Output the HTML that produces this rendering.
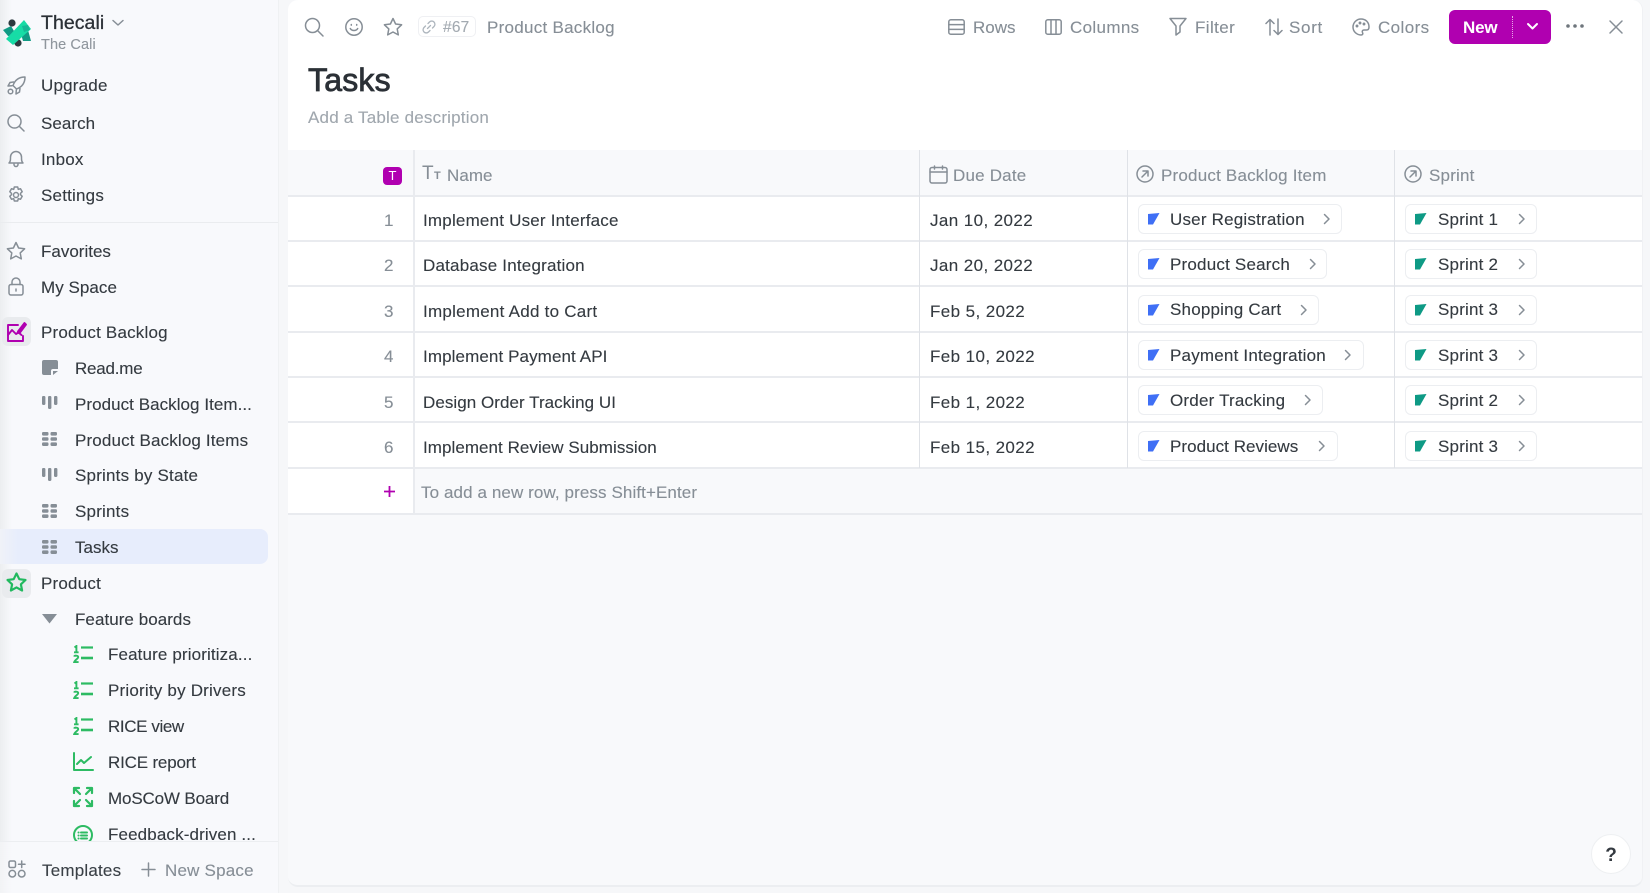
<!DOCTYPE html>
<html><head><meta charset="utf-8">
<style>
*{box-sizing:border-box}
html,body{margin:0;width:1650px;height:893px;overflow:hidden;background:#f6f7f9;font-family:"Liberation Sans",sans-serif;color:#343a40}
#w{position:absolute;left:0;top:0;width:1650px;height:893px;overflow:hidden;filter:blur(.3px)}
.t{position:absolute;height:24px;margin-top:1px;line-height:24px;font-size:17px;letter-spacing:.2px;white-space:nowrap;-webkit-text-stroke:.12px currentColor}
.d{letter-spacing:.4px}
.a{position:absolute}
svg.i{position:absolute;fill:none;stroke:#868e96;stroke-width:1.5;stroke-linecap:round;stroke-linejoin:round;overflow:visible}
.g{color:#868e96}
#side{position:absolute;left:0;top:0;width:279px;height:893px;background:linear-gradient(90deg,#eceef0 0,#f8f9fc 12px);border-right:1px solid #eff1f3;overflow:hidden}
#panel{position:absolute;left:288px;top:0;width:1355px;height:887px;background:#f8f9fb;border-radius:10px 10px 10px 10px;border-bottom:2px solid #eceef1;border-right:1px solid #f0f1f4}
#top{position:absolute;left:288px;top:0;width:1354px;height:150px;background:#fff;border-radius:10px 10px 0 0}
.hl{position:absolute;left:288px;width:1354px;height:2px;background:#e9ebef}
.vl{position:absolute;width:2px;background:#e9ebef}
.chip{position:absolute;height:30px;background:#fff;border:1px solid #eceef1;border-radius:6px}
.flag{position:absolute}
.r{position:absolute;left:288px;width:1354px;height:45px;background:#fff}
</style></head><body>
<svg width="0" height="0" style="position:absolute">
<defs>
<symbol id="grid" viewBox="0 0 16 14"><g fill="#868e96" stroke="none"><rect x="0" y="0" width="6.5" height="3.6" rx="1.2"/><rect x="8.5" y="0" width="6.5" height="3.6" rx="1.2"/><rect x="0" y="5.2" width="6.5" height="3.6" rx="1.2"/><rect x="8.5" y="5.2" width="6.5" height="3.6" rx="1.2"/><rect x="0" y="10.4" width="6.5" height="3.6" rx="1.2"/><rect x="8.5" y="10.4" width="6.5" height="3.6" rx="1.2"/></g></symbol>
<symbol id="kan" viewBox="0 0 16 14"><g fill="#868e96" stroke="none"><rect x="0" y="0" width="3.4" height="9" rx="1.2"/><rect x="6" y="0" width="3.4" height="13" rx="1.2"/><rect x="12" y="0" width="3.4" height="9" rx="1.2"/></g></symbol>
<symbol id="num" viewBox="0 0 20 18"><g fill="none" stroke="#2dbb63" stroke-width="2.2"><path d="M8 2.500h12"/><path d="M8 13h12" stroke-width="2.6"/><path d="M1.500 2.500 3.400 1v6.200M1 7.300h4.600" stroke-width="1.900"/><path d="M1.200 11.600c.4-1.400 4-1.300 4 .5 0 1.600-3.400 2.800-4 5h4.400" stroke-width="1.900"/></g></symbol>
<symbol id="chev" viewBox="0 0 8 12"><path d="M1.500 1.500 6 6l-4.500 4.500" fill="none" stroke="#868e96" stroke-width="1.500" stroke-linecap="round" stroke-linejoin="round"/></symbol>
</defs>
</svg>
<div id="w">
<div id="side">
  <!-- logo -->
  <svg class="a" style="left:0;top:10px" width="50" height="45" viewBox="0 0 50 45">
    <path d="M3 20 11 16 17 26 8 26Z" fill="#119a84"/>
    <path d="M21 24 28 20 31 31 23 31Z" fill="#119a84"/>
    <circle cx="12" cy="13" r="3.600" fill="#2e3a3f"/><circle cx="18" cy="33" r="3.600" fill="#2e3a3f"/>
    <path d="M6 29 13 35 31 19 24 10Z" fill="#17dca6"/>
    <path d="M22 16 28 15 30 20 24 22Z" fill="#17b896"/>
  </svg>
  <div class="t" style="left:41px;top:10px;font-size:19.500px;-webkit-text-stroke:.3px #2b3036;color:#2b3036;letter-spacing:.05px">Thecali</div>
  <svg class="i" style="left:112px;top:19px" width="12" height="8" viewBox="0 0 12 8"><path d="M1 1.500 6 6l5-4.500"/></svg>
  <div class="t" style="left:41px;top:32px;font-size:14.500px;color:#8f969d;letter-spacing:.1px">The Cali</div>

  <svg class="i" style="left:7px;top:76px" width="19" height="19" viewBox="0 0 19 19"><path d="M6 9.500C8 4 12 1 18 1c0 6-3 10-8.500 12L6 9.500Z"/><path d="M6.500 6 3 6.500 1 10l4-.3M13 12.500l-.5 3.500-3.500 2 .3-4"/><circle cx="3.500" cy="15.500" r="2.300"/></svg>
  <div class="t" style="left:41px;top:73px">Upgrade</div>
  <svg class="i" style="left:7px;top:114px" width="18" height="18" viewBox="0 0 18 18"><circle cx="7.500" cy="7.500" r="6.500"/><path d="M12.500 12.500 17 17"/></svg>
  <div class="t" style="left:41px;top:111px;letter-spacing:.05px">Search</div>
  <svg class="i" style="left:7px;top:150px" width="18" height="18" viewBox="0 0 18 18"><path d="M2 13c1.500-1.500 1.500-3 1.500-6a5.500 5.500 0 0 1 11 0c0 3 0 4.500 1.500 6Z"/><path d="M7 14v.5a2 2 0 0 0 4 0V14"/></svg>
  <div class="t" style="left:41px;top:147px">Inbox</div>
  <svg class="i" style="left:7px;top:186px" width="18" height="18" viewBox="0 0 18 18"><path d="M7.300 1h3.400l.6 2.400 2.200-.7 1.700 3-1.700 1.700v1.200l1.700 1.700-1.700 3-2.200-.7-.6 2.400H7.300l-.6-2.400-2.200.7-1.700-3 1.700-1.700V7.400L2.800 5.700l1.700-3 2.200.7Z"/><circle cx="9" cy="9" r="2.500"/></svg>
  <div class="t" style="left:41px;top:183px">Settings</div>
  <div class="a" style="left:0;top:222px;width:278px;height:1px;background:#eaecef"></div>

  <svg class="i" style="left:6px;top:241px" width="20" height="19" viewBox="0 0 20 19"><path d="M10 1.500 12.600 7l6 .8-4.400 4.100 1.100 6L10 15l-5.300 2.900 1.100-6L1.400 7.800l6-.8Z"/></svg>
  <div class="t" style="left:41px;top:239px;letter-spacing:0">Favorites</div>
  <svg class="i" style="left:8px;top:277px" width="16" height="19" viewBox="0 0 16 19"><rect x="1" y="7.500" width="14" height="10.500" rx="2"/><path d="M4 7.500V5a4 4 0 0 1 8 0v2.500M8 12v2"/></svg>
  <div class="t" style="left:41px;top:275px;letter-spacing:.05px">My Space</div>

  <div class="a" style="left:2px;top:317px;width:29px;height:29px;background:#e9ebee;border-radius:6px"></div>
  <svg class="i" style="left:7px;top:320px;stroke:#b000b0;stroke-width:1.900" width="20" height="22" viewBox="0 0 20 22"><path d="M11 5H1v16h15v-5"/><path d="M1 15l4-5 4 4 2.500-1.500 3 2.500"/><path d="M11 11.500 17.500 3l1.500 1.500-6 8-2.500.5Z" fill="#b000b0"/></svg>
  <div class="t" style="left:41px;top:320px">Product Backlog</div>

  <svg class="a" style="left:42px;top:360px" width="16" height="15" viewBox="0 0 16 15"><path d="M2 0h12a2 2 0 0 1 2 2v7h-5a2 2 0 0 0-2 2v4H2a2 2 0 0 1-2-2V2a2 2 0 0 1 2-2ZM11 11h5l-5 4Z" fill="#868e96"/></svg>
  <div class="t" style="left:75px;top:356px;letter-spacing:-.22px">Read.me</div>
  <svg class="a" style="left:42px;top:396px" width="16" height="14"><use href="#kan"/></svg>
  <div class="t" style="left:75px;top:392px;letter-spacing:.05px">Product Backlog Item...</div>
  <svg class="a" style="left:42px;top:432px" width="16" height="14"><use href="#grid"/></svg>
  <div class="t" style="left:75px;top:428px;letter-spacing:.15px">Product Backlog Items</div>
  <svg class="a" style="left:42px;top:468px" width="16" height="14"><use href="#kan"/></svg>
  <div class="t" style="left:75px;top:463px">Sprints by State</div>
  <svg class="a" style="left:42px;top:504px" width="16" height="14"><use href="#grid"/></svg>
  <div class="t" style="left:75px;top:499px">Sprints</div>
  <div class="a" style="left:0;top:529px;width:268px;height:35px;background:linear-gradient(90deg,#f0f2f8 0,#e7edfc 18px);border-radius:0 8px 8px 0"></div>
  <svg class="a" style="left:42px;top:540px" width="16" height="14"><use href="#grid"/></svg>
  <div class="t" style="left:75px;top:535px;letter-spacing:0">Tasks</div>

  <div class="a" style="left:2px;top:569px;width:29px;height:29px;background:#e9ebee;border-radius:6px"></div>
  <svg class="i" style="left:6px;top:572px;stroke:#22b95f;stroke-width:2.200" width="21" height="20" viewBox="0 0 21 20"><path d="M10.500 1.500 13.300 7.200l6.200.8-4.600 4.300 1.200 6.200-5.600-3.100-5.600 3.100 1.200-6.200L1.500 8l6.200-.8Z"/></svg>
  <div class="t" style="left:41px;top:571px">Product</div>

  <svg class="a" style="left:42px;top:614px" width="15" height="10" viewBox="0 0 15 10"><path d="M0 0h15L7.500 9.500Z" fill="#868e96"/></svg>
  <div class="t" style="left:75px;top:607px;letter-spacing:.05px">Feature boards</div>

  <svg class="a" style="left:73px;top:645px" width="20" height="18"><use href="#num"/></svg>
  <div class="t" style="left:108px;top:642px;letter-spacing:.13px">Feature prioritiza...</div>
  <svg class="a" style="left:73px;top:681px" width="20" height="18"><use href="#num"/></svg>
  <div class="t" style="left:108px;top:678px">Priority by Drivers</div>
  <svg class="a" style="left:73px;top:717px" width="20" height="18"><use href="#num"/></svg>
  <div class="t" style="left:108px;top:714px;letter-spacing:-.4px">RICE view</div>
  <svg class="i" style="left:73px;top:752px;stroke:#2dbb63;stroke-width:2" width="20" height="19" viewBox="0 0 20 19"><path d="M1 1v17h19"/><path d="M4 12l4-4 3 3 7-6"/></svg>
  <div class="t" style="left:108px;top:750px;letter-spacing:-.18px">RICE report</div>
  <svg class="i" style="left:73px;top:787px;stroke:#2dbb63;stroke-width:2.200" width="20" height="20" viewBox="0 0 20 20"><path d="M1 6V1h5M1 1l6 6M14 1h5v5M19 1l-6 6M1 14v5h5M1 19l6-6M14 19h5v-5M19 19l-6-6"/></svg>
  <div class="t" style="left:108px;top:786px;letter-spacing:-.15px">MoSCoW Board</div>
  <svg class="i" style="left:73px;top:825px;stroke:#2dbb63;stroke-width:2" width="20" height="20" viewBox="0 0 20 20"><circle cx="10" cy="10" r="9"/><path d="M8 7.500h6M8 10.500h6M8 13.500h6M5.500 7.500h.1M5.500 10.500h.1M5.500 13.500h.1"/></svg>
  <div class="t" style="left:108px;top:822px;letter-spacing:.13px">Feedback-driven ...</div>

  <div class="a" style="left:0;top:841px;width:278px;height:52px;background:linear-gradient(90deg,#f2f3f5 0,#f8f9fc 12px);border-top:1px solid #eceef1"></div>
  <svg class="i" style="left:8px;top:860px" width="18" height="18" viewBox="0 0 18 18"><rect x="1" y="1" width="6.500" height="6.500" rx="1.500"/><circle cx="4.300" cy="13.700" r="3.300"/><circle cx="13.700" cy="13.700" r="3.300"/><path d="M13.700 1v6.500M10.500 4.300H17"/></svg>
  <div class="t" style="left:42px;top:858px;color:#3a4046">Templates</div>
  <svg class="i" style="left:142px;top:863px" width="13" height="13" viewBox="0 0 13 13"><path d="M6.500 0v13M0 6.500h13"/></svg>
  <div class="t g" style="left:165px;top:858px">New Space</div>
</div>

<div id="panel"></div>
<div id="top"></div>

<!-- toolbar -->
<svg class="i" style="left:304px;top:17px" width="20" height="20" viewBox="0 0 20 20"><circle cx="8.500" cy="8.500" r="7"/><path d="M14 14l5 5"/></svg>
<svg class="i" style="left:345px;top:18px" width="18" height="18" viewBox="0 0 18 18"><circle cx="9" cy="9" r="8.200"/><path d="M5.300 10.500c1.500 2.700 5.900 2.700 7.400 0M6.300 6.500v.6M11.700 6.500v.6"/></svg>
<svg class="i" style="left:383px;top:17px" width="20" height="19" viewBox="0 0 20 19"><path d="M10 1.500 12.600 7l6 .8-4.400 4.100 1.100 6L10 15l-5.300 2.900 1.100-6L1.400 7.800l6-.8Z"/></svg>
<div class="a" style="left:418px;top:16px;width:58px;height:21px;border:1px solid #eff0f3;border-radius:5px"></div>
<svg class="i" style="left:422px;top:20px;stroke:#adb5bd;stroke-width:1.300" width="14" height="14" viewBox="0 0 14 14"><path d="M5.500 8.500l3-3M6 3.500 7.500 2a3 3 0 0 1 4.500 4.500L10.500 8M8 10.500 6.500 12A3 3 0 0 1 2 7.500L3.500 6"/></svg>
<div class="t" style="left:443px;top:15px;font-size:15.500px;color:#a3aab1">#67</div>
<div class="t g" style="left:487px;top:15px;letter-spacing:.27px">Product Backlog</div>

<svg class="i" style="left:948px;top:19px" width="17" height="16" viewBox="0 0 17 16"><rect x=".8" y=".8" width="15.400" height="14.400" rx="2"/><path d="M.8 5.600h15.400M.8 10.400h15.400"/></svg>
<div class="t g" style="left:973px;top:15px;letter-spacing:0">Rows</div>
<svg class="i" style="left:1045px;top:19px" width="17" height="16" viewBox="0 0 17 16"><rect x=".8" y=".8" width="15.400" height="14.400" rx="2"/><path d="M6 .8v14.400M11 .8v14.400"/></svg>
<div class="t g" style="left:1070px;top:15px;letter-spacing:.35px">Columns</div>
<svg class="i" style="left:1169px;top:17px" width="18" height="19" viewBox="0 0 18 19"><path d="M1 1.500h16L11 9v6l-4 3V9Z"/></svg>
<div class="t g" style="left:1195px;top:15px;letter-spacing:.4px">Filter</div>
<svg class="i" style="left:1265px;top:18px" width="18" height="18" viewBox="0 0 18 18"><path d="M5 17V1.500M1 5.500 5 1.500l4 4M13 1v15.500M9 12.500l4 4 4-4"/></svg>
<div class="t g" style="left:1289px;top:15px;letter-spacing:.7px">Sort</div>
<svg class="i" style="left:1352px;top:18px" width="18" height="18" viewBox="0 0 18 18"><path d="M9 1a8 8 0 1 0 0 16c2 0 2-1.500 1.500-2.500-.7-1.500.2-2.500 1.500-2.500h2.500c1.500 0 2.500-1 2.500-3C17 4 13.500 1 9 1Z"/><circle cx="5" cy="8" r=".7"/><circle cx="8" cy="5" r=".7"/><circle cx="12" cy="6" r=".7"/></svg>
<div class="t g" style="left:1378px;top:15px;letter-spacing:.4px">Colors</div>
<div class="a" style="left:1449px;top:10px;width:102px;height:34px;background:#b000b0;border-radius:6px"></div>
<div class="t" style="left:1463px;top:15px;color:#fff;font-weight:bold;letter-spacing:-.2px;-webkit-text-stroke:0">New</div>
<div class="a" style="left:1512px;top:16px;height:22px;border-left:1px dotted #e7a6e7"></div>
<svg class="i" style="left:1527px;top:23px;stroke:#fff;stroke-width:2" width="11" height="7" viewBox="0 0 11 7"><path d="M1 1l4.500 4.500L10 1"/></svg>
<svg class="a" style="left:1566px;top:23px" width="18" height="6" viewBox="0 0 18 6"><g fill="#6f767d"><circle cx="2" cy="3" r="1.800"/><circle cx="9" cy="3" r="1.800"/><circle cx="16" cy="3" r="1.800"/></g></svg>
<svg class="i" style="left:1609px;top:20px" width="14" height="14" viewBox="0 0 14 14"><path d="M1 1l12 12M13 1 1 13"/></svg>

<!-- title -->
<div class="a" style="left:308px;top:60px;font-size:32px;line-height:40px;color:#2b3036;-webkit-text-stroke:.8px #2b3036;letter-spacing:.2px">Tasks</div>
<div class="t" style="left:308px;top:105px;color:#a0a7ae">Add a Table description</div>

<!-- table -->
<div class="a" style="left:288px;top:150px;width:1354px;height:46px;background:#f8f9fb"></div>
<div class="r" style="top:196px"></div><div class="r" style="top:241px"></div><div class="r" style="top:286px"></div><div class="r" style="top:332px"></div><div class="r" style="top:377px"></div><div class="r" style="top:422px"></div>
<div class="a" style="left:288px;top:468px;width:125px;height:45px;background:#fff"></div>
<div class="hl" style="top:195px"></div><div class="hl" style="top:240px"></div><div class="hl" style="top:285px"></div><div class="hl" style="top:331px"></div><div class="hl" style="top:376px"></div><div class="hl" style="top:421px"></div><div class="hl" style="top:467px"></div><div class="hl" style="top:513px"></div>
<div class="vl" style="left:413px;top:150px;height:364px"></div>
<div class="vl" style="left:919px;top:150px;height:318px;width:1px;background:#dfe2e7"></div>
<div class="vl" style="left:1127px;top:150px;height:318px;width:1px;background:#dfe2e7"></div>
<div class="vl" style="left:1394px;top:150px;height:318px;width:1px;background:#dfe2e7"></div>

<!-- header -->
<div class="a" style="left:383px;top:167px;width:19px;height:18px;background:#b000b0;border-radius:4px;color:#fff;font-size:13px;line-height:18px;text-align:center">T</div>
<div class="a g" style="left:422px;top:162px;font-size:19px;line-height:24px">T</div><div class="a g" style="left:434px;top:169px;font-size:11px;line-height:14px;font-weight:bold">T</div>
<div class="t g" style="left:447px;top:163px;letter-spacing:.05px">Name</div>
<svg class="i" style="left:929px;top:165px" width="19" height="19" viewBox="0 0 19 19"><rect x="1" y="2.500" width="17" height="15.500" rx="2"/><path d="M1 7h17M5.500 1v3M13.500 1v3"/></svg>
<div class="t g" style="left:953px;top:163px">Due Date</div>
<svg class="i" style="left:1136px;top:165px" width="18" height="18" viewBox="0 0 18 18"><circle cx="9" cy="9" r="8"/><path d="M6 12l6-6M7 6h5v5"/></svg>
<div class="t g" style="left:1161px;top:163px">Product Backlog Item</div>
<svg class="i" style="left:1404px;top:165px" width="18" height="18" viewBox="0 0 18 18"><circle cx="9" cy="9" r="8"/><path d="M6 12l6-6M7 6h5v5"/></svg>
<div class="t g" style="left:1429px;top:163px">Sprint</div>

<!-- rows -->
<div class="t g" style="left:384px;top:208px">1</div><div class="t" style="left:423px;top:208px">Implement User Interface</div><div class="t d" style="left:930px;top:208px">Jan 10, 2022</div>
<div class="t g" style="left:384px;top:253px">2</div><div class="t" style="left:423px;top:253px">Database Integration</div><div class="t d" style="left:930px;top:253px">Jan 20, 2022</div>
<div class="t g" style="left:384px;top:299px">3</div><div class="t" style="left:423px;top:299px;letter-spacing:.25px">Implement Add to Cart</div><div class="t d" style="left:930px;top:299px">Feb 5, 2022</div>
<div class="t g" style="left:384px;top:344px">4</div><div class="t" style="left:423px;top:344px;letter-spacing:.1px">Implement Payment API</div><div class="t d" style="left:930px;top:344px">Feb 10, 2022</div>
<div class="t g" style="left:384px;top:390px">5</div><div class="t" style="left:423px;top:390px;letter-spacing:.05px">Design Order Tracking UI</div><div class="t d" style="left:930px;top:390px">Feb 1, 2022</div>
<div class="t g" style="left:384px;top:435px">6</div><div class="t" style="left:423px;top:435px;letter-spacing:.05px">Implement Review Submission</div><div class="t d" style="left:930px;top:435px">Feb 15, 2022</div>

<!-- chips row1 -->
<div class="chip" style="left:1138px;top:204px;width:204px"></div><svg class="flag" style="left:1148px;top:213px" width="12" height="12" viewBox="0 0 12 12"><path d="M0 1 11.500 0 5 11.500H0Z" fill="#3f6ff5"/></svg><div class="t" style="left:1170px;top:207px">User Registration</div><svg class="a" style="left:1323px;top:213px" width="8" height="12"><use href="#chev"/></svg>
<div class="chip" style="left:1405px;top:204px;width:132px"></div><svg class="flag" style="left:1415px;top:213px" width="12" height="12" viewBox="0 0 12 12"><path d="M0 1 11.500 0 5 11.500H0Z" fill="#0e9a85"/></svg><div class="t" style="left:1438px;top:207px">Sprint 1</div><svg class="a" style="left:1518px;top:213px" width="8" height="12"><use href="#chev"/></svg>
<!-- row2 -->
<div class="chip" style="left:1138px;top:249px;width:189px"></div><svg class="flag" style="left:1148px;top:258px" width="12" height="12" viewBox="0 0 12 12"><path d="M0 1 11.500 0 5 11.500H0Z" fill="#3f6ff5"/></svg><div class="t" style="left:1170px;top:252px">Product Search</div><svg class="a" style="left:1309px;top:258px" width="8" height="12"><use href="#chev"/></svg>
<div class="chip" style="left:1405px;top:249px;width:132px"></div><svg class="flag" style="left:1415px;top:258px" width="12" height="12" viewBox="0 0 12 12"><path d="M0 1 11.500 0 5 11.500H0Z" fill="#0e9a85"/></svg><div class="t" style="left:1438px;top:252px">Sprint 2</div><svg class="a" style="left:1518px;top:258px" width="8" height="12"><use href="#chev"/></svg>
<!-- row3 -->
<div class="chip" style="left:1138px;top:295px;width:181px"></div><svg class="flag" style="left:1148px;top:304px" width="12" height="12" viewBox="0 0 12 12"><path d="M0 1 11.500 0 5 11.500H0Z" fill="#3f6ff5"/></svg><div class="t" style="left:1170px;top:297px">Shopping Cart</div><svg class="a" style="left:1300px;top:304px" width="8" height="12"><use href="#chev"/></svg>
<div class="chip" style="left:1405px;top:295px;width:132px"></div><svg class="flag" style="left:1415px;top:304px" width="12" height="12" viewBox="0 0 12 12"><path d="M0 1 11.500 0 5 11.500H0Z" fill="#0e9a85"/></svg><div class="t" style="left:1438px;top:297px">Sprint 3</div><svg class="a" style="left:1518px;top:304px" width="8" height="12"><use href="#chev"/></svg>
<!-- row4 -->
<div class="chip" style="left:1138px;top:340px;width:226px"></div><svg class="flag" style="left:1148px;top:349px" width="12" height="12" viewBox="0 0 12 12"><path d="M0 1 11.500 0 5 11.500H0Z" fill="#3f6ff5"/></svg><div class="t" style="left:1170px;top:343px">Payment Integration</div><svg class="a" style="left:1344px;top:349px" width="8" height="12"><use href="#chev"/></svg>
<div class="chip" style="left:1405px;top:340px;width:132px"></div><svg class="flag" style="left:1415px;top:349px" width="12" height="12" viewBox="0 0 12 12"><path d="M0 1 11.500 0 5 11.500H0Z" fill="#0e9a85"/></svg><div class="t" style="left:1438px;top:343px">Sprint 3</div><svg class="a" style="left:1518px;top:349px" width="8" height="12"><use href="#chev"/></svg>
<!-- row5 -->
<div class="chip" style="left:1138px;top:385px;width:185px"></div><svg class="flag" style="left:1148px;top:394px" width="12" height="12" viewBox="0 0 12 12"><path d="M0 1 11.500 0 5 11.500H0Z" fill="#3f6ff5"/></svg><div class="t" style="left:1170px;top:388px">Order Tracking</div><svg class="a" style="left:1304px;top:394px" width="8" height="12"><use href="#chev"/></svg>
<div class="chip" style="left:1405px;top:385px;width:132px"></div><svg class="flag" style="left:1415px;top:394px" width="12" height="12" viewBox="0 0 12 12"><path d="M0 1 11.500 0 5 11.500H0Z" fill="#0e9a85"/></svg><div class="t" style="left:1438px;top:388px">Sprint 2</div><svg class="a" style="left:1518px;top:394px" width="8" height="12"><use href="#chev"/></svg>
<!-- row6 -->
<div class="chip" style="left:1138px;top:431px;width:200px"></div><svg class="flag" style="left:1148px;top:440px" width="12" height="12" viewBox="0 0 12 12"><path d="M0 1 11.500 0 5 11.500H0Z" fill="#3f6ff5"/></svg><div class="t" style="left:1170px;top:434px;letter-spacing:.05px">Product Reviews</div><svg class="a" style="left:1318px;top:440px" width="8" height="12"><use href="#chev"/></svg>
<div class="chip" style="left:1405px;top:431px;width:132px"></div><svg class="flag" style="left:1415px;top:440px" width="12" height="12" viewBox="0 0 12 12"><path d="M0 1 11.500 0 5 11.500H0Z" fill="#0e9a85"/></svg><div class="t" style="left:1438px;top:434px">Sprint 3</div><svg class="a" style="left:1518px;top:440px" width="8" height="12"><use href="#chev"/></svg>

<!-- add row -->
<svg class="i" style="left:384px;top:486px;stroke:#b000b0;stroke-width:1.800;stroke-linecap:butt" width="11" height="11" viewBox="0 0 11 11"><path d="M5.500 0v11M0 5.500h11"/></svg>
<div class="t g" style="left:421px;top:480px;letter-spacing:.1px">To add a new row, press Shift+Enter</div>

<!-- help -->
<div class="a" style="left:1591px;top:834px;width:40px;height:40px;background:#fff;border:1px solid #eef0f2;border-radius:50%;text-align:center;line-height:42px;font-size:19px;font-weight:bold;color:#343a40">?</div>
</div>
</body></html>
